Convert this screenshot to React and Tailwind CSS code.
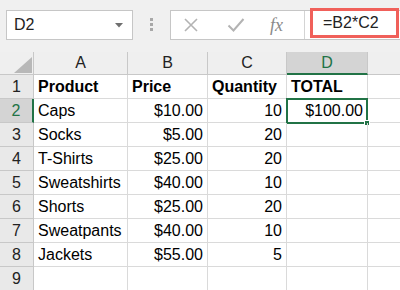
import React from "react";

const data = [
  ["Product", "Price", "Quantity", "TOTAL"],
  ["Caps", "$10.00", "10", "$100.00"],
  ["Socks", "$5.00", "20", ""],
  ["T-Shirts", "$25.00", "20", ""],
  ["Sweatshirts", "$40.00", "10", ""],
  ["Shorts", "$25.00", "20", ""],
  ["Sweatpants", "$40.00", "10", ""],
  ["Jackets", "$55.00", "5", ""],
  ["", "", "", ""],
];

const cols = ["A", "B", "C", "D"];

function Toolbar() {
  return (
    <div className="flex h-[52px] items-start bg-[#f0f0f0] pt-[10px]">
      {/* Name box */}
      <div className="ml-[6px] flex h-[30px] w-[127px] items-center justify-between border border-[#c6c6c6] bg-white pl-[7px] pr-[9px]">
        <span className="text-[16px] text-[#222]">D2</span>
        <svg width="8" height="5" viewBox="0 0 8 5">
          <path d="M0 0h8L4 4.5z" fill="#6f6f6f" />
        </svg>
      </div>

      {/* Grip dots */}
      <div className="ml-[17px] mt-[8px] flex flex-col gap-[2px]">
        <span className="h-[3px] w-[3px] bg-[#a8a8a8]" />
        <span className="h-[3px] w-[3px] bg-[#a8a8a8]" />
        <span className="h-[3px] w-[3px] bg-[#a8a8a8]" />
      </div>

      {/* Formula bar */}
      <div className="ml-[17px] flex h-[30px] flex-1 items-center border border-r-0 border-[#c6c6c6] bg-white">
        <div className="flex h-full w-[134px] items-center border-r border-[#d4d4d4]">
          <svg className="ml-[12px]" width="16" height="16" viewBox="0 0 16 16">
            <path d="M2 2L14 14M14 2L2 14" stroke="#b3b3b3" strokeWidth="1.6" fill="none" />
          </svg>
          <svg className="ml-[28px]" width="18" height="16" viewBox="0 0 18 16">
            <path d="M1.5 8.5L6.5 13.5L16.5 2" stroke="#b3b3b3" strokeWidth="2" fill="none" />
          </svg>
          <span className="ml-[25px] font-['Liberation_Serif',serif] text-[18px] italic text-[#8a8a8a]">
            fx
          </span>
        </div>
      </div>
    </div>
  );
}

export default function App() {
  return (
    <div className="relative h-[290px] w-[400px] overflow-hidden bg-white font-['Liberation_Sans',Arial,sans-serif] text-black">
      <Toolbar />

      {/* Highlighted formula input */}
      <div className="absolute left-[310px] top-[8px] flex h-[30px] w-[89px] items-center border-[3px] border-[#f0605a] bg-white pl-[10px] text-[16px] text-[#222]">
        =B2*C2
      </div>

      {/* Sheet grid */}
      <div className="grid grid-cols-[34px_94px_80px_79px_81px_1fr] text-[16px]">
        {/* Column headers */}
        <div className="relative h-[23px] border-r border-b border-[#c8c8c8] bg-[#efefef]">
          <svg className="absolute right-[1px] bottom-[1px]" width="18" height="16" viewBox="0 0 18 16">
            <path d="M18 0V16H0z" fill="#b8b8b8" />
          </svg>
        </div>
        {cols.map((c) => (
          <div
            key={c}
            className={
              c === "D"
                ? "flex h-[23px] items-center justify-center border-r border-b-2 border-r-[#c8c8c8] border-b-[#217346] bg-[#d4d4d4] text-[#217346]"
                : "flex h-[23px] items-center justify-center border-r border-b border-[#c8c8c8] bg-[#efefef] text-[#222]"
            }
          >
            {c}
          </div>
        ))}
        <div className="h-[23px] border-b border-[#c8c8c8] bg-[#efefef]" />

        {data.map((row, i) => {
          const n = i + 1;
          const bold = n === 1;
          return (
            <React.Fragment key={n}>
              <div
                className={
                  n === 2
                    ? "flex h-[24px] items-center justify-center border-r-2 border-b border-r-[#217346] border-b-[#c8c8c8] bg-[#d4d4d4] text-[#217346]"
                    : "flex h-[24px] items-center justify-center border-r border-b border-[#c8c8c8] bg-[#e9e9e9] text-[#222]"
                }
              >
                {n}
              </div>
              {row.map((val, j) => {
                const right = !bold && j > 0;
                return (
                  <div
                    key={j}
                    className={`relative flex h-[24px] items-center border-r border-b border-[#dadada] pt-[1px] ${
                      right ? "justify-end pr-[4px]" : "pl-[4px]"
                    } ${bold ? "font-bold" : ""}`}
                  >
                    {val}
                    {n === 2 && j === 3 && (
                      <div className="absolute -left-[1px] -top-[1px] h-[26px] w-[82px] border-2 border-[#217346]">
                        <div className="absolute -right-[4px] -bottom-[4px] h-[6px] w-[6px] border border-white bg-[#217346]" />
                      </div>
                    )}
                  </div>
                );
              })}
              <div className="h-[24px] border-b border-[#dadada]" />
            </React.Fragment>
          );
        })}
      </div>
    </div>
  );
}
